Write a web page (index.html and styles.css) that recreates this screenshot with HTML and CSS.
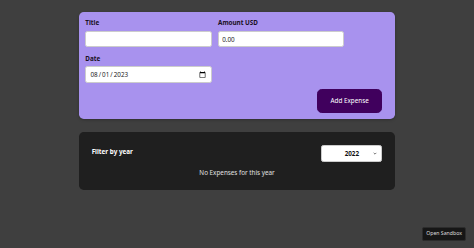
FILE: index.html
```html
<!DOCTYPE html>
<html lang="en">
<head>
<meta charset="utf-8">
<title>Expenses</title>
<link rel="stylesheet" href="styles.css">
</head>
<body>
<div class="new-expense">
  <form>
    <div class="controls">
      <div class="control">
        <label>Title</label>
        <input type="text" value="">
      </div>
      <div class="control">
        <label>Amount USD</label>
        <input type="number" value="0.00" step="0.01">
      </div>
      <div class="control">
        <label>Date</label>
        <input type="date" value="2023-08-01">
      </div>
    </div>
    <div class="actions">
      <button type="button">Add Expense</button>
    </div>
  </form>
</div>
<div class="expenses">
  <div class="filter">
    <div class="filter-control">
      <label>Filter by year</label>
      <select>
        <option>2022</option>
        <option>2021</option>
        <option>2020</option>
        <option>2019</option>
      </select>
    </div>
  </div>
  <p class="fallback">No Expenses for this year</p>
</div>
<button class="sandbox" type="button">Open Sandbox</button>
</body>
</html>
```

FILE: styles.css
```css
* { box-sizing: border-box; }
html { font-family: "Noto Sans", "DejaVu Sans", sans-serif; }
body {
  margin: 0;
  background-color: #3f3f3f;
  font-size: 6.32px;
  line-height: 1.5;
}
.new-expense {
  background-color: #a892ee;
  padding: 6.32px;
  margin: 12px auto 12.64px;
  width: 316px;
  border-radius: 4.74px;
  box-shadow: 0 1px 3px rgba(0, 0, 0, 0.25);
}
.controls {
  display: flex;
  flex-wrap: wrap;
  gap: 6.32px;
  margin-bottom: 6.32px;
}
.control label {
  display: block;
  font-weight: bold;
  color: #1a1023;
  margin-bottom: 3.16px;
}
.control input {
  font: inherit;
  line-height: 1.2;
  padding: 3.16px;
  border-radius: 2.37px;
  border: 1px solid #ccc;
  width: 126.4px;
  height: 16.4px;
  background: #fff;
  color: #222;
}
.control input::-webkit-inner-spin-button { display: none; }
.actions { text-align: right; }
.actions button {
  font: inherit;
  padding: 6.32px 12.64px;
  border: 1px solid #40005d;
  background-color: #40005d;
  color: #fff;
  border-radius: 4.74px;
  margin-right: 6.32px;
}
.expenses {
  background-color: #1f1f1f;
  padding: 6.32px;
  margin: 12.64px auto;
  width: 316px;
  border-radius: 4.74px;
}
.filter {
  color: #fff;
  padding: 0 6.32px;
}
.filter-control {
  display: flex;
  align-items: center;
  justify-content: space-between;
  margin: 6.32px 0;
}
.filter-control label {
  font-weight: bold;
  margin-bottom: 3.16px;
}
.filter-control select {
  -webkit-appearance: none;
  appearance: none;
  font: inherit;
  font-weight: bold;
  padding: 3.16px 19px;
  width: 61px;
  text-align: center;
  border-radius: 2.37px;
  border: 1px solid #ccc;
  background-color: #fff;
  background-image: url("data:image/svg+xml,%3Csvg xmlns='http://www.w3.org/2000/svg' width='6' height='4' viewBox='0 0 6 4'%3E%3Cpath d='M1 1 L3 3 L5 1' fill='none' stroke='%23333' stroke-width='1'/%3E%3C/svg%3E");
  background-repeat: no-repeat;
  background-position: right 4px center;
  background-size: 4px 3px;
  color: #111;
  height: 17.4px;
}
.fallback {
  color: #e0e0e0;
  text-align: center;
  margin: 6.32px 0;
}
.sandbox {
  position: fixed;
  right: 8px;
  bottom: 7px;
  font-family: "Noto Sans", sans-serif;
  font-size: 5.2px;
  line-height: 1;
  padding: 3.5px 3px;
  background: #161616;
  color: #ddd;
  border: 1px solid #2c2c2c;
  border-radius: 2px;
}
```
